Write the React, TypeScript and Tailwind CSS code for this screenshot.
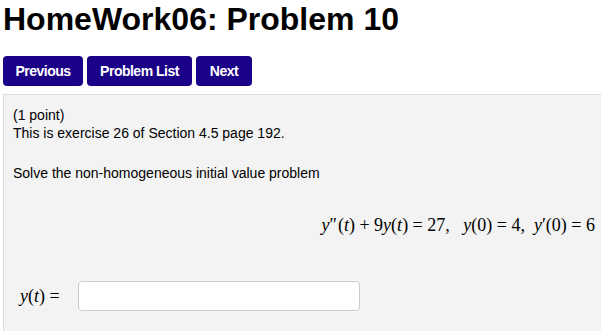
import React from "react";

export default function App() {
  const serif = { fontFamily: '"Liberation Serif", "Times New Roman", serif' };
  return (
    <div className="w-[601px] h-[331px] overflow-hidden bg-white" style={{ fontFamily: '"Liberation Sans", Arial, sans-serif' }}>
      <h1 className="pl-[3px] pt-[1px] text-[32px] leading-[36px] font-bold text-black tracking-[0px]">
        HomeWork06: Problem 10
      </h1>
      <div className="flex gap-[4px] pl-[3px] mt-[19px]">
        <button className="h-[30px] w-[80px] rounded-[4px] bg-[#1b0088] text-white text-[14px] font-bold tracking-[-0.5px]">Previous</button>
        <button className="h-[30px] w-[105px] rounded-[4px] bg-[#1b0088] text-white text-[14px] font-bold tracking-[-0.5px]">Problem List</button>
        <button className="h-[30px] w-[56px] rounded-[4px] bg-[#1b0088] text-white text-[14px] font-bold tracking-[-0.5px]">Next</button>
      </div>
      <div className="ml-[3px] mt-[8px] w-[650px] h-[260px] bg-[#f3f3f3] border border-[#dcdcdc] pl-[9px] pt-[11px] text-[14px] text-black">
        <div className="leading-[18px]">(1 point)</div>
        <div className="leading-[18px]">This is exercise 26 of Section 4.5 page 192.</div>
        <div className="leading-[18px] mt-[22px]">Solve the non-homogeneous initial value problem</div>
        <div className="w-[582px] flex justify-end mt-[32px] text-[18px] leading-[22px]" style={serif}>
          <span>
            <i>y</i>″<span className="ml-[1px]">(</span><i>t</i>) + 9<i>y</i>(<i>t</i>) = 27,&nbsp;&nbsp;&nbsp;<i>y</i>(0) = 4,&nbsp;&nbsp;<i>y</i>′(0) = 6
          </span>
        </div>
        <div className="flex items-center mt-[45px]">
          <span className="ml-[7px] w-[58px] text-[18px]" style={serif}>
            <i>y</i>(<i>t</i>) =
          </span>
          <div className="w-[282px] h-[30px] bg-white border border-[#cccccc] rounded-[4px]" />
        </div>
      </div>
    </div>
  );
}
